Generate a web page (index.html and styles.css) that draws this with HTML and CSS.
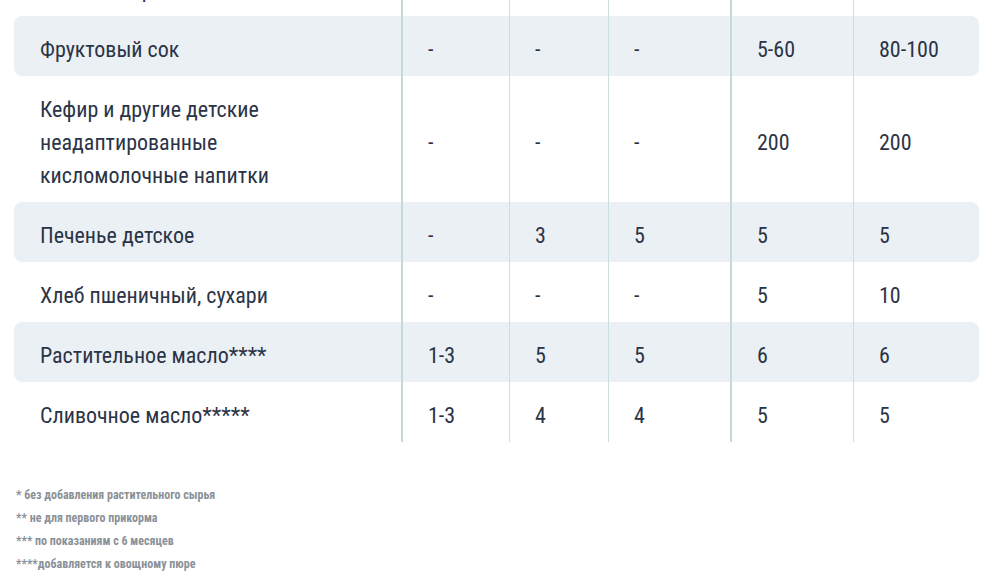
FILE: index.html
```html
<!DOCTYPE html>
<html lang="ru">
<head>
<meta charset="utf-8">
<title>Прикорм</title>
<link rel="stylesheet" href="styles.css">
</head>
<body>
<div class="page">
  <div class="table">
    <div class="row row-cut">
      <div class="cell name">Мясное пюре</div>
      <div class="cell thick"></div>
      <div class="cell"></div>
      <div class="cell"></div>
      <div class="cell thick"></div>
      <div class="cell"></div>
    </div>
    <div class="row shaded">
      <div class="cell name">Фруктовый сок</div>
      <div class="cell thick">-</div>
      <div class="cell">-</div>
      <div class="cell">-</div>
      <div class="cell thick">5-60</div>
      <div class="cell">80-100</div>
    </div>
    <div class="row">
      <div class="cell name">Кефир и другие детские<br>неадаптированные<br>кисломолочные напитки</div>
      <div class="cell thick">-</div>
      <div class="cell">-</div>
      <div class="cell">-</div>
      <div class="cell thick">200</div>
      <div class="cell">200</div>
    </div>
    <div class="row shaded">
      <div class="cell name">Печенье детское</div>
      <div class="cell thick">-</div>
      <div class="cell">3</div>
      <div class="cell">5</div>
      <div class="cell thick">5</div>
      <div class="cell">5</div>
    </div>
    <div class="row">
      <div class="cell name">Хлеб пшеничный, сухари</div>
      <div class="cell thick">-</div>
      <div class="cell">-</div>
      <div class="cell">-</div>
      <div class="cell thick">5</div>
      <div class="cell">10</div>
    </div>
    <div class="row shaded">
      <div class="cell name">Растительное масло****</div>
      <div class="cell thick">1-3</div>
      <div class="cell">5</div>
      <div class="cell">5</div>
      <div class="cell thick">6</div>
      <div class="cell">6</div>
    </div>
    <div class="row">
      <div class="cell name">Сливочное масло*****</div>
      <div class="cell thick">1-3</div>
      <div class="cell">4</div>
      <div class="cell">4</div>
      <div class="cell thick">5</div>
      <div class="cell">5</div>
    </div>
  </div>
  <div class="notes">
    <p>* без добавления растительного сырья</p>
    <p>** не для первого прикорма</p>
    <p>*** по показаниям с 6 месяцев</p>
    <p>****добавляется к овощному пюре</p>
  </div>
</div>
</body>
</html>
```
FILE: styles.css
```css
html, body {
  margin: 0;
  padding: 0;
  background: #ffffff;
}
body {
  font-family: "Roboto", "Liberation Sans", sans-serif;
  font-stretch: 76%;
  color: #2b3447;
  overflow: hidden;
}
.page {
  padding: 0 14px 0 14px;
}
.table {
  margin-top: -44px;
  width: 965px;
}
.row {
  display: grid;
  grid-template-columns: 387px 108px 99px 122px 123px 126px;
  border-radius: 8px;
}
.row.shaded {
  background: #ebf0f4;
}
.cell {
  font-size: 22px;
  line-height: 33px;
  padding: 17px 0 10px 25px;
  border-left: 1px solid #cadede;
  display: flex;
  align-items: center;
  box-sizing: border-box;
}
.cell.thick {
  border-left: 2px solid #c3d9da;
}
.cell.name {
  border-left: none;
  padding-left: 26px;
  display: block;
  align-self: center;
}
.notes {
  padding: 42px 0 0 2px;
}
.notes p {
  margin: 0;
  font-size: 12px;
  line-height: 23px;
  font-weight: 700;
  color: #8a9198;
}
```
